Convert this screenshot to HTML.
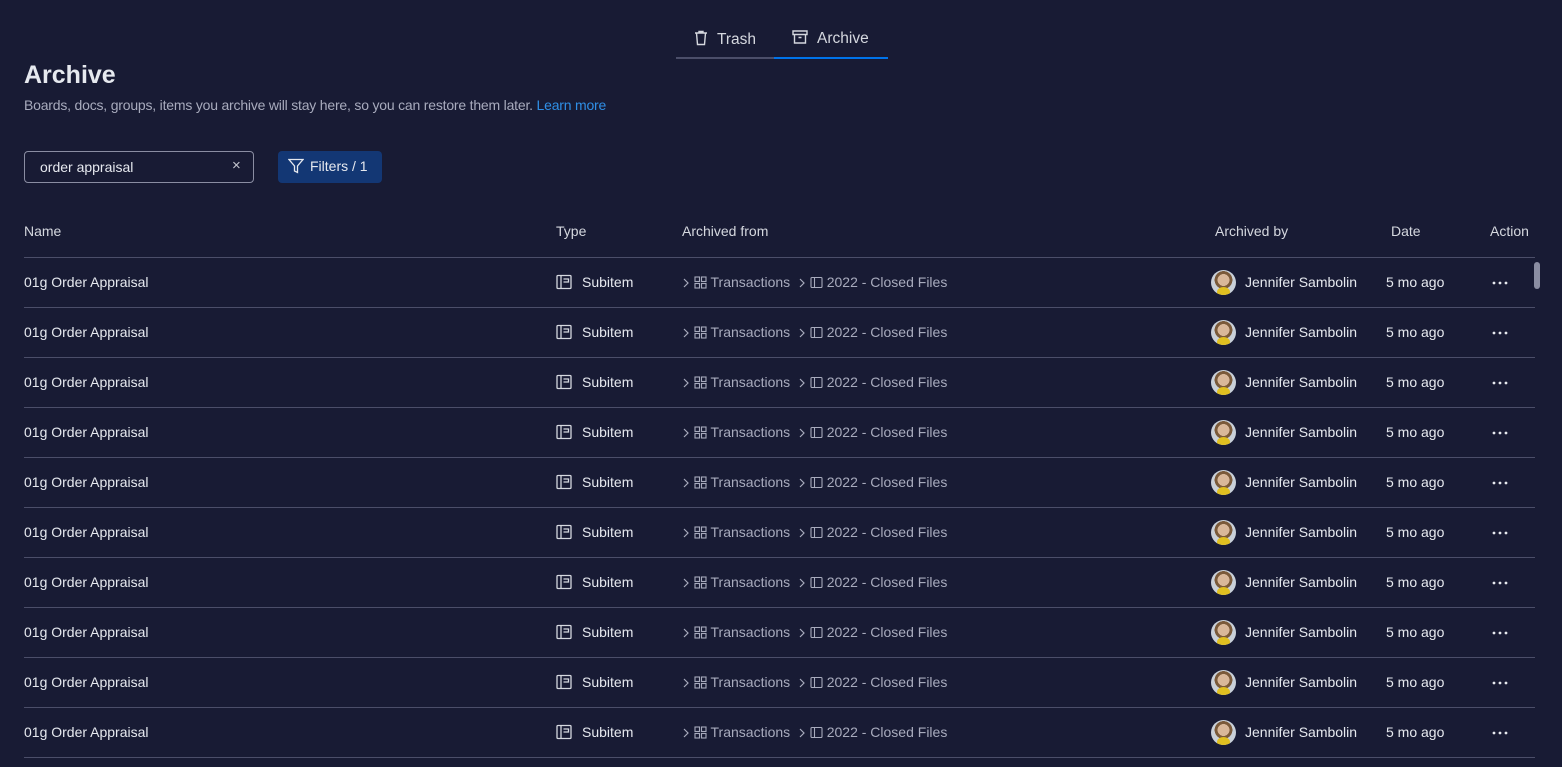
<!DOCTYPE html>
<html><head><meta charset="utf-8"><style>
*{margin:0;padding:0;box-sizing:border-box}
body{width:1562px;height:767px;background:#181b34;font-family:"Liberation Sans",sans-serif;color:#d5d8df;position:relative;overflow:hidden}
.a{position:absolute;white-space:nowrap}
.tab{font-size:15.5px;color:#d5d8df;top:30px}
.h{font-size:14px;color:#d5d8df;top:223px}
.row{position:absolute;left:24px;width:1511px;height:50px;border-bottom:1px solid #4b4e69}
.row .a{top:16px;font-size:14px}
.n{left:0;color:#e6e9ef}
.t{left:532px;color:#e6e9ef}
.p{left:658px;color:#a8abbd}
.p svg{vertical-align:-2px}
.u{left:1221px;color:#e6e9ef}
.d{left:1362px;color:#e6e9ef}
.av{position:absolute;left:1187px;top:12px;width:25px;height:25px;border-radius:50%;background:radial-gradient(circle at 50% 40%,#d9b89a 0 30%,#7a5a3a 31% 45%,#c9d0d8 46%);overflow:hidden}
.av:after{content:"";position:absolute;left:6px;top:17px;width:13px;height:10px;background:#e0c020;border-radius:50% 50% 0 0}
.dots{position:absolute;left:1467px;top:23px}
</style></head><body>
<div class="a tab" style="left:694px"><svg width="14" height="16" viewBox="0 0 14 16" style="vertical-align:-2px;margin-right:9px" fill="none" stroke="#d5d8df" stroke-width="1.4"><path d="M1 3h12M5 3V1.5h4V3M2.5 3l1 11.5h7l1-11.5"/></svg>Trash</div>
<div class="a tab" style="left:792px"><svg width="16" height="14" viewBox="0 0 16 14" style="vertical-align:-1px;margin-right:9px" fill="none" stroke="#d5d8df" stroke-width="1.4"><path d="M1 1h14v3.5H1zM2.5 4.5V13h11V4.5M6.5 7.5h3"/></svg>Archive</div>
<div class="a" style="left:676px;top:57px;width:98px;height:2px;background:#4b4e69"></div>
<div class="a" style="left:774px;top:57px;width:114px;height:2px;background:#0073ea"></div>
<div class="a" style="left:24px;top:61px;font-size:25px;font-weight:bold;color:#e6e9ef">Archive</div>
<div class="a" style="left:24px;top:97px;font-size:14px;color:#a8abbd;letter-spacing:-0.2px">Boards, docs, groups, items you archive will stay here, so you can restore them later. <span style="color:#2f8fe6">Learn more</span></div>
<div class="a" style="left:24px;top:151px;width:230px;height:32px;border:1px solid #8a8da2;border-radius:4px"></div>
<div class="a" style="left:40px;top:159px;font-size:14px;color:#e6e9ef">order appraisal</div>
<div class="a" style="left:232px;top:157px;font-size:15px;color:#c5c7d0">×</div>
<div class="a" style="left:278px;top:151px;width:104px;height:32px;background:#133774;border-radius:4px"></div>
<div class="a" style="left:288px;top:158px;font-size:14px;color:#e6e9ef"><svg width="16" height="16" viewBox="0 0 16 16" style="vertical-align:-3px;margin-right:6px" fill="none" stroke="#e6e9ef" stroke-width="1.3"><path d="M1 1.5h14L9.5 8v6.5l-3-1.5V8z"/></svg>Filters / 1</div>
<div class="a h" style="left:24px">Name</div>
<div class="a h" style="left:556px">Type</div>
<div class="a h" style="left:682px">Archived from</div>
<div class="a h" style="left:1215px">Archived by</div>
<div class="a h" style="left:1391px">Date</div>
<div class="a h" style="left:1490px">Action</div>
<div class="a" style="left:24px;top:257px;width:1511px;height:1px;background:#4b4e69"></div>
<div class="a" style="left:1534px;top:262px;width:6px;height:27px;background:#8a8da2;border-radius:3px"></div>

<div class="row" style="top:258px"><div class="a n">01g Order Appraisal</div><div class="a t"><svg width="16" height="16" viewBox="0 0 16 16" style="vertical-align:-3px;margin-right:10px" fill="none" stroke="#d5d8df" stroke-width="1.3"><rect x="1" y="1.5" width="14" height="13" rx="1"/><path d="M5 1.5v13M7.5 5h5v3h-5"/></svg>Subitem</div><div class="a p"><svg width="8" height="12" viewBox="0 0 8 12" fill="none" stroke="#a8abbd" stroke-width="1.2"><path d="M2 2l4 4-4 4"/></svg> <svg width="13" height="13" viewBox="0 0 13 13" fill="none" stroke="#a8abbd" stroke-width="1.1"><rect x="1" y="1" width="4.5" height="4.5"/><rect x="7.5" y="1" width="4.5" height="4.5"/><rect x="1" y="7.5" width="4.5" height="4.5"/><rect x="7.5" y="7.5" width="4.5" height="4.5"/></svg> Transactions &nbsp;<svg width="8" height="12" viewBox="0 0 8 12" fill="none" stroke="#a8abbd" stroke-width="1.2"><path d="M2 2l4 4-4 4"/></svg> <svg width="13" height="13" viewBox="0 0 13 13" fill="none" stroke="#a8abbd" stroke-width="1.1"><rect x="1" y="1.5" width="11" height="10" rx="1"/><path d="M4.5 1.5v10"/></svg> 2022 - Closed Files</div><div class="av"></div><div class="a u">Jennifer Sambolin</div><div class="a d">5 mo ago</div><svg class="dots" width="18" height="4"><circle cx="3" cy="2" r="1.4" fill="#e6e9ef"/><circle cx="9" cy="2" r="1.4" fill="#e6e9ef"/><circle cx="15" cy="2" r="1.4" fill="#e6e9ef"/></svg></div>
<div class="row" style="top:308px"><div class="a n">01g Order Appraisal</div><div class="a t"><svg width="16" height="16" viewBox="0 0 16 16" style="vertical-align:-3px;margin-right:10px" fill="none" stroke="#d5d8df" stroke-width="1.3"><rect x="1" y="1.5" width="14" height="13" rx="1"/><path d="M5 1.5v13M7.5 5h5v3h-5"/></svg>Subitem</div><div class="a p"><svg width="8" height="12" viewBox="0 0 8 12" fill="none" stroke="#a8abbd" stroke-width="1.2"><path d="M2 2l4 4-4 4"/></svg> <svg width="13" height="13" viewBox="0 0 13 13" fill="none" stroke="#a8abbd" stroke-width="1.1"><rect x="1" y="1" width="4.5" height="4.5"/><rect x="7.5" y="1" width="4.5" height="4.5"/><rect x="1" y="7.5" width="4.5" height="4.5"/><rect x="7.5" y="7.5" width="4.5" height="4.5"/></svg> Transactions &nbsp;<svg width="8" height="12" viewBox="0 0 8 12" fill="none" stroke="#a8abbd" stroke-width="1.2"><path d="M2 2l4 4-4 4"/></svg> <svg width="13" height="13" viewBox="0 0 13 13" fill="none" stroke="#a8abbd" stroke-width="1.1"><rect x="1" y="1.5" width="11" height="10" rx="1"/><path d="M4.5 1.5v10"/></svg> 2022 - Closed Files</div><div class="av"></div><div class="a u">Jennifer Sambolin</div><div class="a d">5 mo ago</div><svg class="dots" width="18" height="4"><circle cx="3" cy="2" r="1.4" fill="#e6e9ef"/><circle cx="9" cy="2" r="1.4" fill="#e6e9ef"/><circle cx="15" cy="2" r="1.4" fill="#e6e9ef"/></svg></div>
<div class="row" style="top:358px"><div class="a n">01g Order Appraisal</div><div class="a t"><svg width="16" height="16" viewBox="0 0 16 16" style="vertical-align:-3px;margin-right:10px" fill="none" stroke="#d5d8df" stroke-width="1.3"><rect x="1" y="1.5" width="14" height="13" rx="1"/><path d="M5 1.5v13M7.5 5h5v3h-5"/></svg>Subitem</div><div class="a p"><svg width="8" height="12" viewBox="0 0 8 12" fill="none" stroke="#a8abbd" stroke-width="1.2"><path d="M2 2l4 4-4 4"/></svg> <svg width="13" height="13" viewBox="0 0 13 13" fill="none" stroke="#a8abbd" stroke-width="1.1"><rect x="1" y="1" width="4.5" height="4.5"/><rect x="7.5" y="1" width="4.5" height="4.5"/><rect x="1" y="7.5" width="4.5" height="4.5"/><rect x="7.5" y="7.5" width="4.5" height="4.5"/></svg> Transactions &nbsp;<svg width="8" height="12" viewBox="0 0 8 12" fill="none" stroke="#a8abbd" stroke-width="1.2"><path d="M2 2l4 4-4 4"/></svg> <svg width="13" height="13" viewBox="0 0 13 13" fill="none" stroke="#a8abbd" stroke-width="1.1"><rect x="1" y="1.5" width="11" height="10" rx="1"/><path d="M4.5 1.5v10"/></svg> 2022 - Closed Files</div><div class="av"></div><div class="a u">Jennifer Sambolin</div><div class="a d">5 mo ago</div><svg class="dots" width="18" height="4"><circle cx="3" cy="2" r="1.4" fill="#e6e9ef"/><circle cx="9" cy="2" r="1.4" fill="#e6e9ef"/><circle cx="15" cy="2" r="1.4" fill="#e6e9ef"/></svg></div>
<div class="row" style="top:408px"><div class="a n">01g Order Appraisal</div><div class="a t"><svg width="16" height="16" viewBox="0 0 16 16" style="vertical-align:-3px;margin-right:10px" fill="none" stroke="#d5d8df" stroke-width="1.3"><rect x="1" y="1.5" width="14" height="13" rx="1"/><path d="M5 1.5v13M7.5 5h5v3h-5"/></svg>Subitem</div><div class="a p"><svg width="8" height="12" viewBox="0 0 8 12" fill="none" stroke="#a8abbd" stroke-width="1.2"><path d="M2 2l4 4-4 4"/></svg> <svg width="13" height="13" viewBox="0 0 13 13" fill="none" stroke="#a8abbd" stroke-width="1.1"><rect x="1" y="1" width="4.5" height="4.5"/><rect x="7.5" y="1" width="4.5" height="4.5"/><rect x="1" y="7.5" width="4.5" height="4.5"/><rect x="7.5" y="7.5" width="4.5" height="4.5"/></svg> Transactions &nbsp;<svg width="8" height="12" viewBox="0 0 8 12" fill="none" stroke="#a8abbd" stroke-width="1.2"><path d="M2 2l4 4-4 4"/></svg> <svg width="13" height="13" viewBox="0 0 13 13" fill="none" stroke="#a8abbd" stroke-width="1.1"><rect x="1" y="1.5" width="11" height="10" rx="1"/><path d="M4.5 1.5v10"/></svg> 2022 - Closed Files</div><div class="av"></div><div class="a u">Jennifer Sambolin</div><div class="a d">5 mo ago</div><svg class="dots" width="18" height="4"><circle cx="3" cy="2" r="1.4" fill="#e6e9ef"/><circle cx="9" cy="2" r="1.4" fill="#e6e9ef"/><circle cx="15" cy="2" r="1.4" fill="#e6e9ef"/></svg></div>
<div class="row" style="top:458px"><div class="a n">01g Order Appraisal</div><div class="a t"><svg width="16" height="16" viewBox="0 0 16 16" style="vertical-align:-3px;margin-right:10px" fill="none" stroke="#d5d8df" stroke-width="1.3"><rect x="1" y="1.5" width="14" height="13" rx="1"/><path d="M5 1.5v13M7.5 5h5v3h-5"/></svg>Subitem</div><div class="a p"><svg width="8" height="12" viewBox="0 0 8 12" fill="none" stroke="#a8abbd" stroke-width="1.2"><path d="M2 2l4 4-4 4"/></svg> <svg width="13" height="13" viewBox="0 0 13 13" fill="none" stroke="#a8abbd" stroke-width="1.1"><rect x="1" y="1" width="4.5" height="4.5"/><rect x="7.5" y="1" width="4.5" height="4.5"/><rect x="1" y="7.5" width="4.5" height="4.5"/><rect x="7.5" y="7.5" width="4.5" height="4.5"/></svg> Transactions &nbsp;<svg width="8" height="12" viewBox="0 0 8 12" fill="none" stroke="#a8abbd" stroke-width="1.2"><path d="M2 2l4 4-4 4"/></svg> <svg width="13" height="13" viewBox="0 0 13 13" fill="none" stroke="#a8abbd" stroke-width="1.1"><rect x="1" y="1.5" width="11" height="10" rx="1"/><path d="M4.5 1.5v10"/></svg> 2022 - Closed Files</div><div class="av"></div><div class="a u">Jennifer Sambolin</div><div class="a d">5 mo ago</div><svg class="dots" width="18" height="4"><circle cx="3" cy="2" r="1.4" fill="#e6e9ef"/><circle cx="9" cy="2" r="1.4" fill="#e6e9ef"/><circle cx="15" cy="2" r="1.4" fill="#e6e9ef"/></svg></div>
<div class="row" style="top:508px"><div class="a n">01g Order Appraisal</div><div class="a t"><svg width="16" height="16" viewBox="0 0 16 16" style="vertical-align:-3px;margin-right:10px" fill="none" stroke="#d5d8df" stroke-width="1.3"><rect x="1" y="1.5" width="14" height="13" rx="1"/><path d="M5 1.5v13M7.5 5h5v3h-5"/></svg>Subitem</div><div class="a p"><svg width="8" height="12" viewBox="0 0 8 12" fill="none" stroke="#a8abbd" stroke-width="1.2"><path d="M2 2l4 4-4 4"/></svg> <svg width="13" height="13" viewBox="0 0 13 13" fill="none" stroke="#a8abbd" stroke-width="1.1"><rect x="1" y="1" width="4.5" height="4.5"/><rect x="7.5" y="1" width="4.5" height="4.5"/><rect x="1" y="7.5" width="4.5" height="4.5"/><rect x="7.5" y="7.5" width="4.5" height="4.5"/></svg> Transactions &nbsp;<svg width="8" height="12" viewBox="0 0 8 12" fill="none" stroke="#a8abbd" stroke-width="1.2"><path d="M2 2l4 4-4 4"/></svg> <svg width="13" height="13" viewBox="0 0 13 13" fill="none" stroke="#a8abbd" stroke-width="1.1"><rect x="1" y="1.5" width="11" height="10" rx="1"/><path d="M4.5 1.5v10"/></svg> 2022 - Closed Files</div><div class="av"></div><div class="a u">Jennifer Sambolin</div><div class="a d">5 mo ago</div><svg class="dots" width="18" height="4"><circle cx="3" cy="2" r="1.4" fill="#e6e9ef"/><circle cx="9" cy="2" r="1.4" fill="#e6e9ef"/><circle cx="15" cy="2" r="1.4" fill="#e6e9ef"/></svg></div>
<div class="row" style="top:558px"><div class="a n">01g Order Appraisal</div><div class="a t"><svg width="16" height="16" viewBox="0 0 16 16" style="vertical-align:-3px;margin-right:10px" fill="none" stroke="#d5d8df" stroke-width="1.3"><rect x="1" y="1.5" width="14" height="13" rx="1"/><path d="M5 1.5v13M7.5 5h5v3h-5"/></svg>Subitem</div><div class="a p"><svg width="8" height="12" viewBox="0 0 8 12" fill="none" stroke="#a8abbd" stroke-width="1.2"><path d="M2 2l4 4-4 4"/></svg> <svg width="13" height="13" viewBox="0 0 13 13" fill="none" stroke="#a8abbd" stroke-width="1.1"><rect x="1" y="1" width="4.5" height="4.5"/><rect x="7.5" y="1" width="4.5" height="4.5"/><rect x="1" y="7.5" width="4.5" height="4.5"/><rect x="7.5" y="7.5" width="4.5" height="4.5"/></svg> Transactions &nbsp;<svg width="8" height="12" viewBox="0 0 8 12" fill="none" stroke="#a8abbd" stroke-width="1.2"><path d="M2 2l4 4-4 4"/></svg> <svg width="13" height="13" viewBox="0 0 13 13" fill="none" stroke="#a8abbd" stroke-width="1.1"><rect x="1" y="1.5" width="11" height="10" rx="1"/><path d="M4.5 1.5v10"/></svg> 2022 - Closed Files</div><div class="av"></div><div class="a u">Jennifer Sambolin</div><div class="a d">5 mo ago</div><svg class="dots" width="18" height="4"><circle cx="3" cy="2" r="1.4" fill="#e6e9ef"/><circle cx="9" cy="2" r="1.4" fill="#e6e9ef"/><circle cx="15" cy="2" r="1.4" fill="#e6e9ef"/></svg></div>
<div class="row" style="top:608px"><div class="a n">01g Order Appraisal</div><div class="a t"><svg width="16" height="16" viewBox="0 0 16 16" style="vertical-align:-3px;margin-right:10px" fill="none" stroke="#d5d8df" stroke-width="1.3"><rect x="1" y="1.5" width="14" height="13" rx="1"/><path d="M5 1.5v13M7.5 5h5v3h-5"/></svg>Subitem</div><div class="a p"><svg width="8" height="12" viewBox="0 0 8 12" fill="none" stroke="#a8abbd" stroke-width="1.2"><path d="M2 2l4 4-4 4"/></svg> <svg width="13" height="13" viewBox="0 0 13 13" fill="none" stroke="#a8abbd" stroke-width="1.1"><rect x="1" y="1" width="4.5" height="4.5"/><rect x="7.5" y="1" width="4.5" height="4.5"/><rect x="1" y="7.5" width="4.5" height="4.5"/><rect x="7.5" y="7.5" width="4.5" height="4.5"/></svg> Transactions &nbsp;<svg width="8" height="12" viewBox="0 0 8 12" fill="none" stroke="#a8abbd" stroke-width="1.2"><path d="M2 2l4 4-4 4"/></svg> <svg width="13" height="13" viewBox="0 0 13 13" fill="none" stroke="#a8abbd" stroke-width="1.1"><rect x="1" y="1.5" width="11" height="10" rx="1"/><path d="M4.5 1.5v10"/></svg> 2022 - Closed Files</div><div class="av"></div><div class="a u">Jennifer Sambolin</div><div class="a d">5 mo ago</div><svg class="dots" width="18" height="4"><circle cx="3" cy="2" r="1.4" fill="#e6e9ef"/><circle cx="9" cy="2" r="1.4" fill="#e6e9ef"/><circle cx="15" cy="2" r="1.4" fill="#e6e9ef"/></svg></div>
<div class="row" style="top:658px"><div class="a n">01g Order Appraisal</div><div class="a t"><svg width="16" height="16" viewBox="0 0 16 16" style="vertical-align:-3px;margin-right:10px" fill="none" stroke="#d5d8df" stroke-width="1.3"><rect x="1" y="1.5" width="14" height="13" rx="1"/><path d="M5 1.5v13M7.5 5h5v3h-5"/></svg>Subitem</div><div class="a p"><svg width="8" height="12" viewBox="0 0 8 12" fill="none" stroke="#a8abbd" stroke-width="1.2"><path d="M2 2l4 4-4 4"/></svg> <svg width="13" height="13" viewBox="0 0 13 13" fill="none" stroke="#a8abbd" stroke-width="1.1"><rect x="1" y="1" width="4.5" height="4.5"/><rect x="7.5" y="1" width="4.5" height="4.5"/><rect x="1" y="7.5" width="4.5" height="4.5"/><rect x="7.5" y="7.5" width="4.5" height="4.5"/></svg> Transactions &nbsp;<svg width="8" height="12" viewBox="0 0 8 12" fill="none" stroke="#a8abbd" stroke-width="1.2"><path d="M2 2l4 4-4 4"/></svg> <svg width="13" height="13" viewBox="0 0 13 13" fill="none" stroke="#a8abbd" stroke-width="1.1"><rect x="1" y="1.5" width="11" height="10" rx="1"/><path d="M4.5 1.5v10"/></svg> 2022 - Closed Files</div><div class="av"></div><div class="a u">Jennifer Sambolin</div><div class="a d">5 mo ago</div><svg class="dots" width="18" height="4"><circle cx="3" cy="2" r="1.4" fill="#e6e9ef"/><circle cx="9" cy="2" r="1.4" fill="#e6e9ef"/><circle cx="15" cy="2" r="1.4" fill="#e6e9ef"/></svg></div>
<div class="row" style="top:708px"><div class="a n">01g Order Appraisal</div><div class="a t"><svg width="16" height="16" viewBox="0 0 16 16" style="vertical-align:-3px;margin-right:10px" fill="none" stroke="#d5d8df" stroke-width="1.3"><rect x="1" y="1.5" width="14" height="13" rx="1"/><path d="M5 1.5v13M7.5 5h5v3h-5"/></svg>Subitem</div><div class="a p"><svg width="8" height="12" viewBox="0 0 8 12" fill="none" stroke="#a8abbd" stroke-width="1.2"><path d="M2 2l4 4-4 4"/></svg> <svg width="13" height="13" viewBox="0 0 13 13" fill="none" stroke="#a8abbd" stroke-width="1.1"><rect x="1" y="1" width="4.5" height="4.5"/><rect x="7.5" y="1" width="4.5" height="4.5"/><rect x="1" y="7.5" width="4.5" height="4.5"/><rect x="7.5" y="7.5" width="4.5" height="4.5"/></svg> Transactions &nbsp;<svg width="8" height="12" viewBox="0 0 8 12" fill="none" stroke="#a8abbd" stroke-width="1.2"><path d="M2 2l4 4-4 4"/></svg> <svg width="13" height="13" viewBox="0 0 13 13" fill="none" stroke="#a8abbd" stroke-width="1.1"><rect x="1" y="1.5" width="11" height="10" rx="1"/><path d="M4.5 1.5v10"/></svg> 2022 - Closed Files</div><div class="av"></div><div class="a u">Jennifer Sambolin</div><div class="a d">5 mo ago</div><svg class="dots" width="18" height="4"><circle cx="3" cy="2" r="1.4" fill="#e6e9ef"/><circle cx="9" cy="2" r="1.4" fill="#e6e9ef"/><circle cx="15" cy="2" r="1.4" fill="#e6e9ef"/></svg></div>
</body></html>
